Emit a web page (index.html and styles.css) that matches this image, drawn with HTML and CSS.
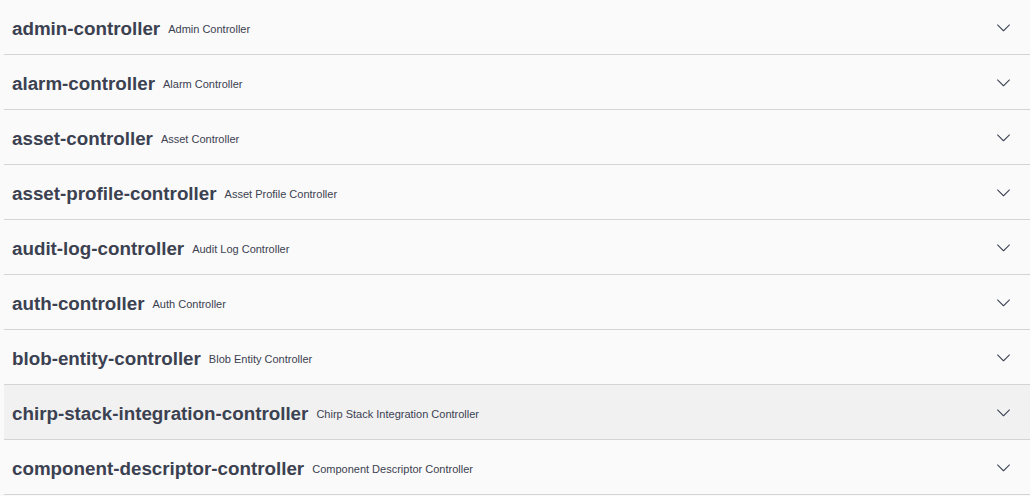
FILE: index.html
```html
<!DOCTYPE html>
<html>
<head>
<meta charset="utf-8">
<link rel="stylesheet" href="styles.css">
</head>
<body>
<div class="tags">
  <div class="tag"><h3 class="tag-name">admin-controller</h3><small class="tag-desc">Admin Controller</small><svg class="arrow" viewBox="0 0 20 20"><path d="M17.418 6.109c.272-.268.709-.268.979 0s.271.701 0 .969l-7.908 7.83c-.27.268-.707.268-.979 0l-7.908-7.83c-.27-.268-.27-.701 0-.969.271-.268.709-.268.979 0L10 13.25l7.418-7.141z"/></svg></div>
  <div class="tag"><h3 class="tag-name">alarm-controller</h3><small class="tag-desc">Alarm Controller</small><svg class="arrow" viewBox="0 0 20 20"><path d="M17.418 6.109c.272-.268.709-.268.979 0s.271.701 0 .969l-7.908 7.83c-.27.268-.707.268-.979 0l-7.908-7.83c-.27-.268-.27-.701 0-.969.271-.268.709-.268.979 0L10 13.25l7.418-7.141z"/></svg></div>
  <div class="tag"><h3 class="tag-name">asset-controller</h3><small class="tag-desc">Asset Controller</small><svg class="arrow" viewBox="0 0 20 20"><path d="M17.418 6.109c.272-.268.709-.268.979 0s.271.701 0 .969l-7.908 7.83c-.27.268-.707.268-.979 0l-7.908-7.83c-.27-.268-.27-.701 0-.969.271-.268.709-.268.979 0L10 13.25l7.418-7.141z"/></svg></div>
  <div class="tag"><h3 class="tag-name">asset-profile-controller</h3><small class="tag-desc">Asset Profile Controller</small><svg class="arrow" viewBox="0 0 20 20"><path d="M17.418 6.109c.272-.268.709-.268.979 0s.271.701 0 .969l-7.908 7.83c-.27.268-.707.268-.979 0l-7.908-7.83c-.27-.268-.27-.701 0-.969.271-.268.709-.268.979 0L10 13.25l7.418-7.141z"/></svg></div>
  <div class="tag"><h3 class="tag-name">audit-log-controller</h3><small class="tag-desc">Audit Log Controller</small><svg class="arrow" viewBox="0 0 20 20"><path d="M17.418 6.109c.272-.268.709-.268.979 0s.271.701 0 .969l-7.908 7.83c-.27.268-.707.268-.979 0l-7.908-7.83c-.27-.268-.27-.701 0-.969.271-.268.709-.268.979 0L10 13.25l7.418-7.141z"/></svg></div>
  <div class="tag"><h3 class="tag-name">auth-controller</h3><small class="tag-desc">Auth Controller</small><svg class="arrow" viewBox="0 0 20 20"><path d="M17.418 6.109c.272-.268.709-.268.979 0s.271.701 0 .969l-7.908 7.83c-.27.268-.707.268-.979 0l-7.908-7.83c-.27-.268-.27-.701 0-.969.271-.268.709-.268.979 0L10 13.25l7.418-7.141z"/></svg></div>
  <div class="tag"><h3 class="tag-name">blob-entity-controller</h3><small class="tag-desc">Blob Entity Controller</small><svg class="arrow" viewBox="0 0 20 20"><path d="M17.418 6.109c.272-.268.709-.268.979 0s.271.701 0 .969l-7.908 7.83c-.27.268-.707.268-.979 0l-7.908-7.83c-.27-.268-.27-.701 0-.969.271-.268.709-.268.979 0L10 13.25l7.418-7.141z"/></svg></div>
  <div class="tag tag-hover"><h3 class="tag-name">chirp-stack-integration-controller</h3><small class="tag-desc">Chirp Stack Integration Controller</small><svg class="arrow" viewBox="0 0 20 20"><path d="M17.418 6.109c.272-.268.709-.268.979 0s.271.701 0 .969l-7.908 7.83c-.27.268-.707.268-.979 0l-7.908-7.83c-.27-.268-.27-.701 0-.969.271-.268.709-.268.979 0L10 13.25l7.418-7.141z"/></svg></div>
  <div class="tag"><h3 class="tag-name">component-descriptor-controller</h3><small class="tag-desc">Component Descriptor Controller</small><svg class="arrow" viewBox="0 0 20 20"><path d="M17.418 6.109c.272-.268.709-.268.979 0s.271.701 0 .969l-7.908 7.83c-.27.268-.707.268-.979 0l-7.908-7.83c-.27-.268-.27-.701 0-.969.271-.268.709-.268.979 0L10 13.25l7.418-7.141z"/></svg></div>
</div>
</body>
</html>
```
FILE: styles.css
```css
html, body {
  margin: 0;
  padding: 0;
  background: #fafafa;
  font-family: "Liberation Sans", Arial, sans-serif;
  color: #3b4151;
}
.tags {
  padding-left: 4px;
}
.tag {
  display: flex;
  align-items: center;
  height: 54px;
  padding: 0 19px 0 8px;
  border-bottom: 1px solid #d3d4d7;
  box-sizing: content-box;
}
.tag-hover {
  background: #f1f1f1;
}
.tag-name {
  margin: 0;
  padding-top: 4px;
  font-size: 18.8px;
  font-weight: bold;
  line-height: 1;
}
.tag-desc {
  flex: 1;
  font-size: 11px;
  padding-top: 4px;
  padding-left: 8px;
  line-height: 1;
}
.arrow {
  width: 15px;
  height: 15px;
  fill: #3b4151;
}
```
